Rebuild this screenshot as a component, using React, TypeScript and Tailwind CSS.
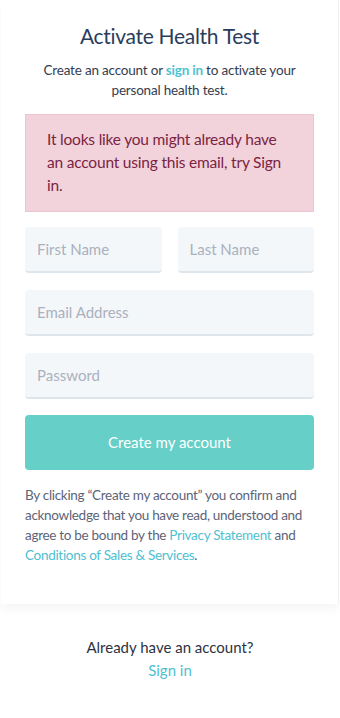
const inputCls =
  "h-[46px] w-full rounded bg-[#f4f7f9] border-b-2 border-[#dfe6eb] px-3 text-[15px] text-[#333] placeholder:text-[#aab1be] outline-none";

export default function App() {
  return (
    <div className="min-h-screen bg-white font-['Lato',sans-serif]">
      <div className="mx-px bg-white border-r border-[#f0f0f0] shadow-[0_6px_10px_rgba(0,0,0,0.04)] px-6 pt-[22px] pb-[39px]">
        <h1 className="text-center text-[21px] leading-7 tracking-[-0.3px] text-[#2b3d5b]">Activate Health Test</h1>
        <p className="mt-[10px] text-center text-[13.5px] leading-5 tracking-[-0.2px] text-[#343d4f]">
          Create an account or <a className="font-bold text-[#4fc3d4]">sign in</a> to activate your
          <br />
          personal health test.
        </p>

        <div className="mt-[14px] bg-[#f2d3dc] border border-[#edc4cf] px-[21px] pt-[13px] pb-[14px] text-[15.5px] leading-[23px] tracking-[-0.2px] text-[#7b2442]">
          It looks like you might already have
          <br />
          an account using this email, try Sign
          <br />
          in.
        </div>

        <form className="mt-[15px] flex flex-col gap-[17px]">
          <div className="grid grid-cols-2 gap-4">
            <input placeholder="First Name" className={inputCls} />
            <input placeholder="Last Name" className={inputCls} />
          </div>
          <input placeholder="Email Address" className={inputCls} />
          <input type="password" placeholder="Password" className={inputCls} />
          <button type="button" className="-mt-px h-[55px] w-full rounded bg-[#66cfc7] text-[15px] text-white">
            Create my account
          </button>
        </form>

        <p className="mt-[15px] whitespace-nowrap text-[13.5px] leading-5 tracking-[-0.3px] text-[#5c6478]">
          By clicking “Create my account” you confirm and
          <br />
          acknowledge that you have read, understood and
          <br />
          agree to be bound by the <a className="text-[#4fc0d1]">Privacy Statement</a> and
          <br />
          <a className="text-[#4fc0d1]">Conditions of Sales &amp; Services</a>.
        </p>
      </div>

      <div className="pt-8 text-center text-[15px] leading-[23px]">
        <p className="text-[#2d3340]">Already have an account?</p>
        <a className="text-[#4fc0d1]">Sign in</a>
      </div>
    </div>
  );
}
